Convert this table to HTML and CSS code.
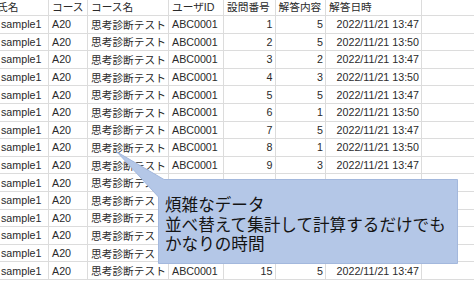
FILE: index.html
```html
<!DOCTYPE html>
<html lang="ja">
<head>
<meta charset="utf-8">
<link rel="stylesheet" href="styles.css">
</head>
<body>
<div class="sheet">
  <div class="c first"><span class="cut">氏名</span></div><div class="c">コース</div><div class="c">コース名</div><div class="c">ユーザID</div><div class="c">設問番号</div><div class="c">解答内容</div><div class="c">解答日時</div><div class="c"></div>

  <div class="c">sample1</div><div class="c">A20</div><div class="c">思考診断テスト</div><div class="c">ABC0001</div><div class="c n">1</div><div class="c n">5</div><div class="c n">2022/11/21 13:47</div><div class="c"></div>
  <div class="c">sample1</div><div class="c">A20</div><div class="c">思考診断テスト</div><div class="c">ABC0001</div><div class="c n">2</div><div class="c n">5</div><div class="c n">2022/11/21 13:50</div><div class="c"></div>
  <div class="c">sample1</div><div class="c">A20</div><div class="c">思考診断テスト</div><div class="c">ABC0001</div><div class="c n">3</div><div class="c n">2</div><div class="c n">2022/11/21 13:47</div><div class="c"></div>
  <div class="c">sample1</div><div class="c">A20</div><div class="c">思考診断テスト</div><div class="c">ABC0001</div><div class="c n">4</div><div class="c n">3</div><div class="c n">2022/11/21 13:50</div><div class="c"></div>
  <div class="c">sample1</div><div class="c">A20</div><div class="c">思考診断テスト</div><div class="c">ABC0001</div><div class="c n">5</div><div class="c n">5</div><div class="c n">2022/11/21 13:47</div><div class="c"></div>
  <div class="c">sample1</div><div class="c">A20</div><div class="c">思考診断テスト</div><div class="c">ABC0001</div><div class="c n">6</div><div class="c n">1</div><div class="c n">2022/11/21 13:50</div><div class="c"></div>
  <div class="c">sample1</div><div class="c">A20</div><div class="c">思考診断テスト</div><div class="c">ABC0001</div><div class="c n">7</div><div class="c n">5</div><div class="c n">2022/11/21 13:47</div><div class="c"></div>
  <div class="c">sample1</div><div class="c">A20</div><div class="c">思考診断テスト</div><div class="c">ABC0001</div><div class="c n">8</div><div class="c n">1</div><div class="c n">2022/11/21 13:50</div><div class="c"></div>
  <div class="c">sample1</div><div class="c">A20</div><div class="c">思考診断テスト</div><div class="c">ABC0001</div><div class="c n">9</div><div class="c n">3</div><div class="c n">2022/11/21 13:47</div><div class="c"></div>
  <div class="c">sample1</div><div class="c">A20</div><div class="c">思考診断テスト</div><div class="c">ABC0001</div><div class="c n">10</div><div class="c n">4</div><div class="c n">2022/11/21 13:50</div><div class="c"></div>
  <div class="c">sample1</div><div class="c">A20</div><div class="c">思考診断テスト</div><div class="c">ABC0001</div><div class="c n">11</div><div class="c n">2</div><div class="c n">2022/11/21 13:47</div><div class="c"></div>
  <div class="c">sample1</div><div class="c">A20</div><div class="c">思考診断テスト</div><div class="c">ABC0001</div><div class="c n">12</div><div class="c n">5</div><div class="c n">2022/11/21 13:50</div><div class="c"></div>
  <div class="c">sample1</div><div class="c">A20</div><div class="c">思考診断テスト</div><div class="c">ABC0001</div><div class="c n">13</div><div class="c n">3</div><div class="c n">2022/11/21 13:47</div><div class="c"></div>
  <div class="c">sample1</div><div class="c">A20</div><div class="c">思考診断テスト</div><div class="c">ABC0001</div><div class="c n">14</div><div class="c n">1</div><div class="c n">2022/11/21 13:50</div><div class="c"></div>
  <div class="c">sample1</div><div class="c">A20</div><div class="c">思考診断テスト</div><div class="c">ABC0001</div><div class="c n">15</div><div class="c n">5</div><div class="c n">2022/11/21 13:47</div><div class="c"></div>
</div>

<svg class="callout-shape" width="474" height="282" viewBox="0 0 474 282" aria-hidden="true">
  <path d="M117 152 L164 179.5 L457.5 179.5 L457.5 263.5 L158.5 263.5 L158.5 197 Z" fill="#b4c7e7" stroke="#a3b8dd" stroke-width="1"/>
</svg>
<div class="callout-text">煩雑なデータ<br>並べ替えて集計して計算するだけでも<br>かなりの時間</div>
</body>
</html>
```

FILE: styles.css
```css
html, body {
  margin: 0;
  padding: 0;
  background: #ffffff;
  overflow: hidden;
  width: 474px;
  height: 282px;
}

body {
  position: relative;
}

.sheet {
  display: grid;
  grid-template-columns: 51px 39px 81px 55px 51.5px 50.5px 96px 52px;
  grid-auto-rows: 17.6px;
  width: 476px;
  margin: -1.6px 0 0 -2px;
  font-family: "Liberation Sans", "Noto Sans CJK JP", sans-serif;
  font-size: 10.7px;
  color: #2a2a2a;
}

.c {
  display: flex;
  align-items: center;
  box-sizing: border-box;
  padding: 0 2px 0 3px;
  border-right: 1px solid #dcdcdc;
  border-bottom: 1px solid #dcdcdc;
  white-space: nowrap;
  overflow: hidden;
}

.c:nth-child(8n) {
  border-right: none;
}

.n {
  justify-content: flex-end;
}

.first {
  padding-left: 0;
}

.cut {
  margin-left: -1px;
}

.callout-shape {
  position: absolute;
  left: 0;
  top: 0;
}

.callout-text {
  position: absolute;
  left: 165px;
  top: 195px;
  font-family: "Noto Sans CJK JP", sans-serif;
  font-size: 16.6px;
  line-height: 19.7px;
  color: #141414;
  white-space: nowrap;
}
```
